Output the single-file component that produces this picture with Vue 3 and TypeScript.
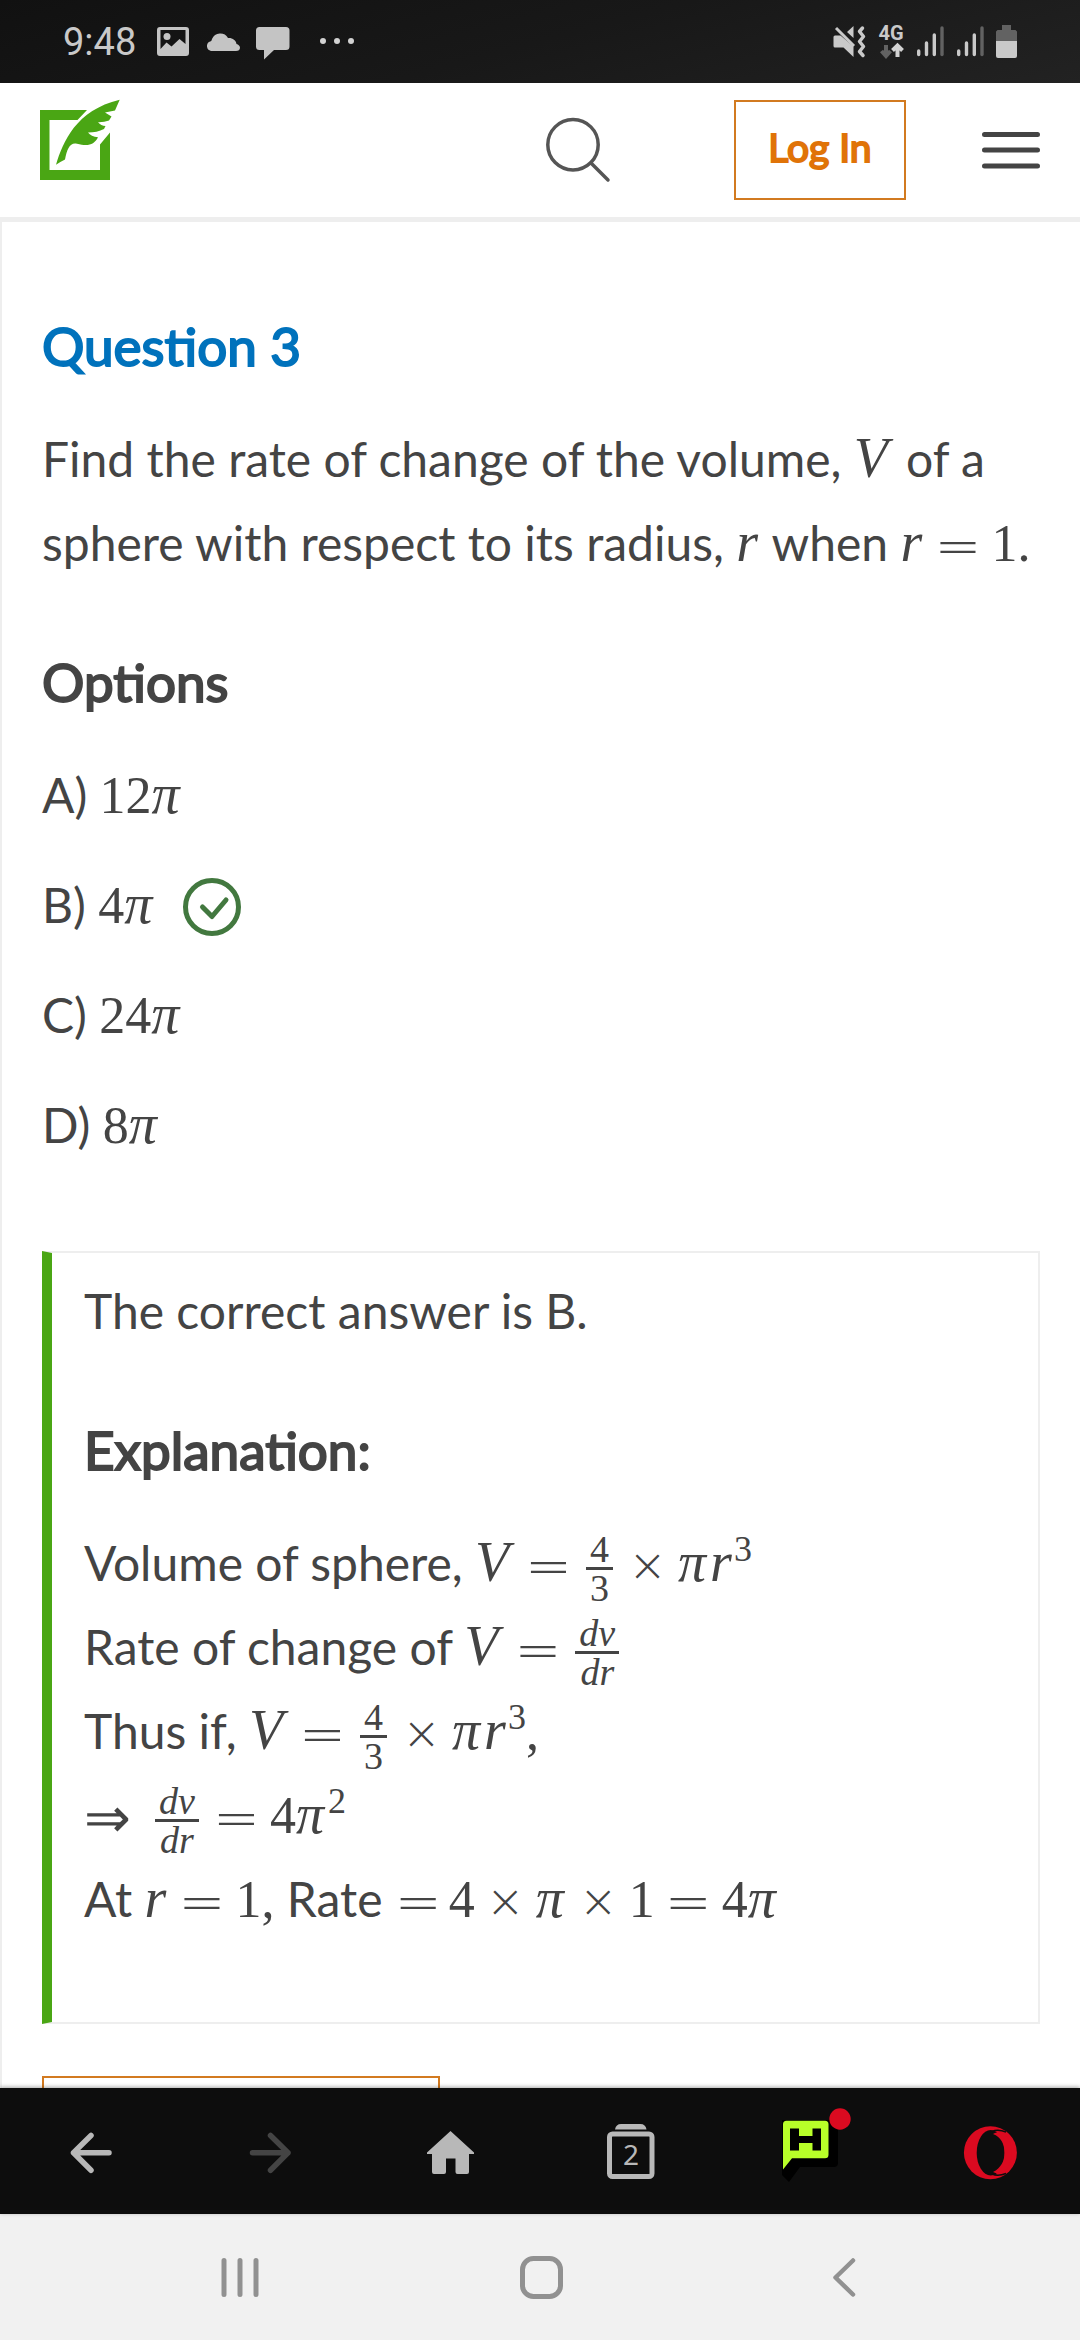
<script setup lang="ts">
import { h, type FunctionalComponent } from 'vue'

type Kind = 'txt' | 'num' | 'cap' | 'var' | 'pi' | 'rel' | 'lead' | 'bin' | 'imp' | 'sup' | 'frac'
interface Token {
  kind: Kind
  text: string
  under?: string
  italic?: boolean
}

const t = (kind: Kind, text: string): Token => ({ kind, text })
const txt = (s: string) => t('txt', s)
const num = (s: string) => t('num', s)
const V = t('cap', 'V')
const r = t('var', 'r')
const pi = t('pi', 'π')
const eq = t('rel', '=')
const times = t('bin', '×')
const sup = (s: string) => t('sup', s)
const frac = (text: string, under: string, italic = false): Token => ({ kind: 'frac', text, under, italic })

// Renders a run of prose and mathematical tokens on one line
const Expr: FunctionalComponent<{ tokens: Token[] }> = (props) =>
  props.tokens.map((k) => {
    if (k.kind === 'txt') return k.text
    if (k.kind === 'frac') {
      return h('span', { class: ['m-frac', { 'm-italic': k.italic }] }, [
        h('span', { class: 'm-top' }, k.text),
        h('span', { class: 'm-under' }, k.under),
      ])
    }
    return h('span', { class: `m-${k.kind}` }, k.text)
  })
Expr.props = ['tokens']

const question: Token[] = [
  txt('Find the rate of change of the volume, '), V,
  txt(' of a sphere with respect to its radius, '), r,
  txt(' when '), r, eq, num('1.'),
]

const options: { letter: string; tokens: Token[]; correct?: boolean }[] = [
  { letter: 'A', tokens: [num('12'), pi] },
  { letter: 'B', tokens: [num('4'), pi], correct: true },
  { letter: 'C', tokens: [num('24'), pi] },
  { letter: 'D', tokens: [num('8'), pi] },
]

const steps: Token[][] = [
  [txt('Volume of sphere, '), V, eq, frac('4', '3'), times, pi, r, sup('3')],
  [txt('Rate of change of '), V, eq, frac('dv', 'dr', true)],
  [txt('Thus if, '), V, eq, frac('4', '3'), times, pi, r, sup('3'), num(',')],
  [t('imp', '⇒'), frac('dv', 'dr', true), eq, num('4'), pi, sup('2')],
  [txt('At '), r, eq, num('1,'), txt(' Rate '), t('lead', '='), num('4'), times, pi, times, num('1'), eq, num('4'), pi],
]
</script>

<template>
  <div class="screen">
    <div class="status">
      <span class="clock">9:48</span>
      <svg class="s-img" viewBox="157 24 32 36" width="32" height="36">
        <path fill="#c4c4c4" fill-rule="evenodd" d="M160 27h26a3 3 0 0 1 3 3v23a3 3 0 0 1-3 3h-26a3 3 0 0 1-3-3V30a3 3 0 0 1 3-3zM160.500 30v19l6-6.500 5 4 8-7.500 6 5V30z" />
        <circle cx="167" cy="36.500" r="3.500" fill="#c4c4c4" />
      </svg>
      <svg class="s-cloud" viewBox="206 24 35 36" width="35" height="36">
        <path fill="#c4c4c4" d="M211 51a5 5 0 0 1-1-9.500c1.500 0 1.500-1 2-2.500a9 9 0 0 1 16-1c4-.5 8 2 8.500 6 2 .5 3.500 2 3.500 3.700 0 2-1.500 3.300-4 3.300z" />
      </svg>
      <svg class="s-chat" viewBox="256 24 34 36" width="34" height="36">
        <path fill="#c4c4c4" d="M259.500 27h26.500a3.500 3.500 0 0 1 3.500 3.500v16a3.500 3.500 0 0 1-3.500 3.500H274l-10 9.500V50h-4.500a3.500 3.500 0 0 1-3.500-3.500v-16a3.500 3.500 0 0 1 3.500-3.500z" />
      </svg>
      <svg class="s-dots" viewBox="319 24 36 36" width="36" height="36" fill="#d2d2d2">
        <circle cx="323" cy="41" r="3" /><circle cx="337" cy="41" r="3" /><circle cx="351" cy="41" r="3" />
      </svg>
      <div class="status-right">
        <svg viewBox="831 24 33 36" width="33" height="36">
          <path fill="#c9c9c9" d="M833 35.500h5.500l13 11V57l-10-9.500H833a1.500 1.500 0 0 1-1.500-1.500v-9a1.500 1.500 0 0 1 1.500-1.500zM845 32l6.500-6v12z" />
          <path fill="none" stroke="#c9c9c9" stroke-width="3" d="M834 28l18 18" />
          <path fill="none" stroke="#c9c9c9" stroke-width="3.500" stroke-linecap="round" stroke-linejoin="round" d="M860.500 28l-3 3.500 4 5-4 5 4 5-4 5 3.500 4" />
        </svg>
        <svg class="s-net" viewBox="872 16 30 52" width="30" height="52">
          <text class="net" x="887" y="40" text-anchor="middle">4G</text>
          <path fill="none" stroke="#626262" stroke-width="4" d="M882 45v11M877.500 51l4.500 5 4.500-5" />
          <path fill="none" stroke="#d2d2d2" stroke-width="4" d="M893.500 57V46M888.500 50.500l5-5 5 5" />
        </svg>
        <svg v-for="n in 2" :key="n" viewBox="915 24 28 36" width="28" height="36" fill="none" stroke="#c9c9c9" stroke-width="3.400" stroke-linecap="round">
          <path d="M917.700 51v3.500M925.500 43v11.500M933.300 35v19.500" /><path stroke="#626262" d="M941 28v26.500" />
        </svg>
        <svg viewBox="996 24 21 36" width="21" height="36">
          <path fill="#626262" d="M1002 25h9v5h4.500l1.500 1.500V42h-21V31.500l1.500-1.500h4.500z" />
          <path fill="#c9c9c9" d="M996 41h21v15a2 2 0 0 1-2 2h-17a2 2 0 0 1-2-2z" />
        </svg>
      </div>
    </div>

    <header class="site-header">
      <a class="logo" href="#" aria-label="Home">
        <svg viewBox="40 98 82 84" width="82" height="84" fill="#4aa614">
          <path d="M40 110H87L77.500 120H49.500V170H100V144.500L110 132.500V180H40Z" />
          <path d="M119.700 99.700L115 110.500 105 112.500 111.500 116.500 109 120.500Q104 122.500 98 122.300Q101 126 105.500 126L104 129Q97 132.500 88 132.500Q91 136.500 98 137.200C94 145 88 146.500 77 143.700C70 142 67 149 65 159.500Q60 162 56 164.700C63 142 76 110 119.700 99.700Z" />
        </svg>
      </a>
      <button class="icon-button search" type="button" aria-label="Search">
        <svg viewBox="545 115 66 68" width="66" height="68" fill="none" stroke="#555" stroke-width="3.500" stroke-linecap="round">
          <circle cx="573" cy="143.700" r="25.200" /><path d="M591 162l17 17" />
        </svg>
      </button>
      <button class="login" type="button">Log In</button>
      <button class="icon-button" type="button" aria-label="Menu">
        <svg viewBox="0 0 58 38" width="58" height="38" stroke="#444" stroke-width="5" stroke-linecap="round">
          <path d="M2.500 3.500h53M2.500 19h53M2.500 35h53" />
        </svg>
      </button>
    </header>

    <main class="page">
      <h2 class="title question-title">Question 3</h2>
      <p><Expr :tokens="question" /></p>

      <h2 class="title">Options</h2>
      <ul class="options">
        <li v-for="o in options" :key="o.letter">{{ o.letter }}) <Expr :tokens="o.tokens" /><svg v-if="o.correct" class="tick" viewBox="0 0 60 60" width="60" height="60" fill="none" stroke="#42783f" stroke-linecap="round" stroke-linejoin="round">
            <circle cx="30" cy="30" r="26.500" stroke-width="5" /><path stroke-width="5" d="M20.500 30L30 39.500L44 23" />
          </svg></li>
      </ul>

      <section class="answer">
        <p>The correct answer is B.</p>
        <h2 class="title">Explanation:</h2>
        <p v-for="(line, i) in steps" :key="i"><Expr :tokens="line" /></p>
      </section>

      <button class="more" type="button" aria-label="Continue"></button>
    </main>

    <nav class="browser-bar">
      <button type="button" aria-label="Back">
        <svg viewBox="0 0 180 126" fill="none" stroke="#b8b8b8" stroke-width="5.500" stroke-linecap="round" stroke-linejoin="round"><path d="M109 64.700H73.500M91 47.500L73.500 64.700L91 82.300" /></svg>
      </button>
      <button type="button" aria-label="Forward">
        <svg viewBox="0 0 180 126" fill="none" stroke="#444" stroke-width="5.500" stroke-linecap="round" stroke-linejoin="round"><path d="M72.500 64.700H108M90.500 47.500L108 64.700L90.500 82.300" /></svg>
      </button>
      <button type="button" aria-label="Home">
        <svg viewBox="0 0 180 126"><path fill="#b8b8b8" d="M90.500 43L114 64.500V66H109V84a2 2 0 0 1-2 2H97.500a2 2 0 0 1-2-2V70.500H86V84a2 2 0 0 1-2 2H74a2 2 0 0 1-2-2V66H67V64.500Z" /></svg>
      </button>
      <button type="button" aria-label="Tabs">
        <svg viewBox="0 0 180 126">
          <path fill="#b8b8b8" d="M75 41.500q1-5.500 6-5.500h19.500q5 0 6 5.500z" />
          <rect x="69.500" y="46" width="42.500" height="42.500" rx="3" fill="none" stroke="#b8b8b8" stroke-width="5" />
          <text class="tab-count" x="91" y="77" text-anchor="middle">2</text>
        </svg>
      </button>
      <button type="button" aria-label="Messages">
        <svg viewBox="0 0 180 126">
          <path fill="#000" d="M62 32h52q4 1 4 5v38a4 4 0 0 1-4 4H80L69 94l-7-7z" />
          <path fill="#b8ff29" d="M66.500 32.700h38.500a3.500 3.500 0 0 1 3.500 3.500v30.500a3.500 3.500 0 0 1-3.500 3.500H72L63 81.500V36.200a3.500 3.500 0 0 1 3.500-3.500z" />
          <path fill="#000" d="M70 40.500h9V48h13.500v-7.500h8.500v22h-8.500V55H79v7.500h-9z" />
          <circle cx="120" cy="31" r="10.700" fill="#db0a20" />
        </svg>
      </button>
      <button type="button" aria-label="Opera menu">
        <svg viewBox="0 0 180 126">
          <circle cx="90.400" cy="64.700" r="26.500" fill="#db0a20" />
          <ellipse cx="90.700" cy="64.700" rx="14" ry="22.700" fill="#0d0d0d" />
          <path fill="#db0a20" d="M93 46C101 41 111 47 112 64.700C111 82 101 88.500 93 84C101 80 104.500 73 104.500 64.700C104.500 56 101 49 93 46Z" />
          <path fill="none" stroke="#0d0d0d" stroke-width="1.500" d="M92 43.500Q98 41 106 44M92 86Q98 88.500 106 85.500" />
        </svg>
      </button>
    </nav>

    <nav class="system-bar">
      <button type="button" aria-label="Recent apps">
        <svg viewBox="0 0 44 44" width="44" height="44" stroke="#919191" stroke-width="5" stroke-linecap="round"><path d="M6 5.500v34M22 5.500v34M38 5.500v34" /></svg>
      </button>
      <button type="button" aria-label="Home screen">
        <svg viewBox="0 0 44 44" width="44" height="44" fill="none" stroke="#919191" stroke-width="5"><rect x="3.500" y="3.500" width="38" height="38" rx="11" /></svg>
      </button>
      <button type="button" aria-label="Go back">
        <svg viewBox="0 0 44 44" width="44" height="44" fill="none" stroke="#919191" stroke-width="4.500" stroke-linecap="round" stroke-linejoin="round"><path d="M33 5.500L15.500 22.500L33 39.500" /></svg>
      </button>
    </nav>
  </div>
</template>

<style>
body {
  margin: 0;
}
.m-num,
.m-sup,
.m-frac {
  font-family: "Liberation Serif", serif;
  font-size: 52px;
  line-height: 1;
}
.m-cap,
.m-var,
.m-pi {
  display: inline-block;
  font-family: "Liberation Serif", serif;
  font-size: 56px;
  font-style: italic;
  line-height: 1;
}
.m-cap {
  width: 40px;
}
.m-var {
  width: 24px;
}
.m-pi {
  width: 32px;
}
.m-rel,
.m-lead,
.m-bin,
.m-imp {
  display: inline-block;
  width: 67px;
  font-family: "DejaVu Sans", sans-serif;
  font-size: 56px;
  font-weight: 200;
  line-height: 40px;
  text-align: center;
  vertical-align: -4px;
}
.m-bin {
  width: 61px;
  font-size: 46px;
  vertical-align: baseline;
}
.m-lead {
  width: 54px;
  text-align: left;
}
.m-imp {
  text-align: left;
}
.m-sup {
  font-size: 36px;
  line-height: 0;
  vertical-align: 20px;
}
.m-frac {
  display: inline-flex;
  flex-direction: column;
  margin: -6px 4px;
  font-size: 38px;
  text-align: center;
  vertical-align: middle;
}
.m-italic {
  font-style: italic;
}
.m-top,
.m-under {
  padding: 0 4px;
  line-height: 36px;
}
.m-top {
  border-bottom: 3px solid #444;
}
</style>

<style scoped>
.screen {
  display: flex;
  flex-direction: column;
  height: 100vh;
  background: #fff;
  color: #444;
  font-family: Lato, sans-serif;
  font-size: 48px;
  line-height: 84px;
}
svg {
  display: block;
}
button {
  border: 0;
  padding: 0;
  background: none;
  font: inherit;
}
.status {
  display: flex;
  flex: none;
  align-items: center;
  height: 83px;
  padding: 0 63px;
  background: linear-gradient(165deg, #111, #181818 50%, #222);
}
.clock {
  color: #c9c9c9;
  font-family: Roboto, sans-serif;
  font-size: 38px;
  line-height: 44px;
}
.s-img {
  margin-left: 21px;
}
.s-cloud {
  margin-left: 17px;
}
.s-chat {
  margin-left: 15px;
}
.s-dots {
  margin-left: 29px;
}
.status-right {
  display: flex;
  align-items: center;
  gap: 12px;
  margin-left: auto;
}
.s-net {
  margin: 0 -2px;
}
.net {
  fill: #c9c9c9;
  font-family: Roboto, sans-serif;
  font-size: 20px;
  font-weight: 700;
}
.site-header {
  display: flex;
  flex: none;
  align-items: center;
  height: 134px;
  padding: 0 40px;
  border-bottom: 5px solid #eee;
}
.logo {
  padding-bottom: 20px;
}
.search {
  margin-left: auto;
}
.login {
  box-sizing: border-box;
  width: 172px;
  height: 100px;
  margin: 0 76px 0 123px;
  padding-bottom: 6px;
  border: 2px solid #d27a20;
  color: #e07308;
  font-size: 39px;
  line-height: 48px;
  -webkit-text-stroke: 2px #e07308;
}
.page {
  flex: 1;
  min-height: 0;
  overflow: hidden;
  padding: 94px 40px 0;
  border-left: 2px solid #eee;
}
p,
h2,
ul {
  margin: 0;
}
.title {
  margin: 67px 0 41px;
  font-size: 53px;
  font-weight: 400;
  line-height: 60px;
  -webkit-text-stroke: 2px currentColor;
}
.question-title {
  margin-top: 0;
  color: #0072bc;
}
.options {
  display: flex;
  flex-direction: column;
  gap: 26px;
  padding: 0;
  list-style: none;
}
.tick {
  display: inline-block;
  margin-left: 26px;
  vertical-align: -14px;
}
.answer {
  margin-top: 84px;
  padding: 16px 32px 81px;
  border: 2px solid #eee;
  border-left: 10px solid #4aa614;
}
.more {
  display: block;
  width: 398px;
  height: 100px;
  margin-top: 52px;
  border: 2px solid #d27a20;
}
.browser-bar {
  z-index: 1;
  display: flex;
  flex: none;
  background: #0d0d0d;
  box-shadow: 0 -1px 4px rgba(0, 0, 0, 0.35);
}
.browser-bar button {
  flex: 1;
  height: 126px;
}
.browser-bar svg {
  width: 100%;
  height: 126px;
}
.tab-count {
  fill: #b8b8b8;
  font-family: "Noto Sans", sans-serif;
  font-size: 28px;
}
.system-bar {
  display: flex;
  flex: none;
  height: 126px;
  padding: 0 87px 0 89px;
  background: #f1f1f1;
}
.system-bar button {
  display: grid;
  flex: 1;
  place-items: center;
}
</style>
